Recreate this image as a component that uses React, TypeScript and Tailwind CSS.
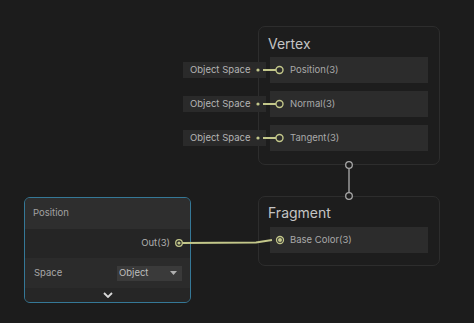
import React from "react";

const wire = "#c3c78a";

function ObjSpace({ top }: { top: number }) {
  return (
    <div className="absolute flex items-center" style={{ left: 183, top }}>
      <div className="flex h-[16px] w-[83px] items-center bg-[#2a2a2a] pl-[7px] text-[9.5px] text-[#b4b4b4]">
        Object Space
      </div>
    </div>
  );
}

function PortRow({ label }: { label: string }) {
  return (
    <div className="flex h-[26px] w-[158px] items-center bg-[#2c2c2c] pl-[20px] text-[9.5px] text-[#a9a9a9]">
      {label}
    </div>
  );
}

export default function App() {
  return (
    <div
      className="relative h-[323px] w-[474px] overflow-hidden bg-[#1c1c1c]"
      style={{ fontFamily: "Inter, 'Noto Sans', sans-serif" }}
    >
      {/* Vertex block */}
      <div className="absolute left-[258px] top-[26px] flex h-[139px] w-[182px] flex-col rounded-[7px] border border-[#2d2d2d] bg-[#1d1d1d] px-[11px]">
        <div className="-ml-[2px] pt-[8px] text-[14px] leading-[18px] text-[#c4c4c4]">Vertex</div>
        <div className="mt-[4px] flex flex-col gap-[8px]">
          <PortRow label="Position(3)" />
          <PortRow label="Normal(3)" />
          <PortRow label="Tangent(3)" />
        </div>
      </div>

      {/* Fragment block */}
      <div className="absolute left-[258px] top-[196px] flex h-[70px] w-[182px] flex-col rounded-[7px] border border-[#2d2d2d] bg-[#1d1d1d] px-[11px]">
        <div className="-ml-[2px] pt-[7px] text-[14px] leading-[18px] text-[#c4c4c4]">Fragment</div>
        <div className="mt-[5px]">
          <PortRow label="Base Color(3)" />
        </div>
      </div>

      <ObjSpace top={62} />
      <ObjSpace top={96} />
      <ObjSpace top={130} />

      {/* Position node */}
      <div className="absolute left-[24px] top-[197px] flex h-[106px] w-[167px] flex-col overflow-hidden rounded-[6px] border-[1.5px] border-[#357897] bg-[#2a2a2a]">
        <div className="flex h-[31px] items-center bg-[#2e2e2e] pl-[8px] text-[9.5px] text-[#a2a2a2]">
          Position
        </div>
        <div className="flex h-[29px] items-center justify-end bg-[#252525] pr-[20px] text-[9.5px] text-[#b0b0b0]">
          Out(3)
        </div>
        <div className="flex h-[30px] items-center justify-between bg-[#2b2b2b] pl-[9px] pr-[8px] text-[9.5px] text-[#a8a8a8]">
          <span>Space</span>
          <div className="flex h-[15px] w-[65px] items-center justify-between bg-[#3a3a3a] pl-[2px] pr-[5px] text-[#bdbdbd]">
            <span>Object</span>
            <svg width="7" height="4" viewBox="0 0 7 4">
              <path d="M0 0 L7 0 L3.5 4 Z" fill="#b0b0b0" />
            </svg>
          </div>
        </div>
        <div className="flex flex-1 items-center justify-center bg-[#262626]">
          <svg width="10" height="6" viewBox="0 0 10 6">
            <path d="M1 1 L5 5 L9 1" stroke="#d8d8d8" strokeWidth="1.8" fill="none" />
          </svg>
        </div>
      </div>

      {/* Wires & ports overlay */}
      <svg className="absolute left-0 top-0" width="474" height="323" viewBox="0 0 474 323">
        <line x1="349" y1="168.5" x2="349" y2="192.5" stroke="#9a9a9a" strokeWidth="1.5" />
        <circle cx="349" cy="165" r="3.3" fill="#1d1d1d" stroke="#a8a8a8" strokeWidth="1.3" />
        <circle cx="349" cy="196" r="3.3" fill="#1d1d1d" stroke="#a8a8a8" strokeWidth="1.3" />

        {[70, 104, 138].map((y) => (
          <g key={y}>
            <circle cx="258" cy={y} r="1.6" fill={wire} />
            <line x1="263" y1={y} x2="276" y2={y} stroke={wire} strokeWidth="2" />
            <circle cx="279.5" cy={y} r="3.5" fill="#2c2c2c" stroke={wire} strokeWidth="1.4" />
          </g>
        ))}

        <path d="M182 243 L256 242.5 L272 240" stroke={wire} strokeWidth="2" fill="none" />
        <circle cx="179" cy="243" r="3.3" fill="#262626" stroke={wire} strokeWidth="1.3" />
        <circle cx="179" cy="243" r="1.6" fill={wire} />
        <circle cx="280" cy="240" r="3.5" fill="#2c2c2c" stroke={wire} strokeWidth="1.3" />
        <circle cx="280" cy="240" r="2" fill={wire} />
      </svg>
    </div>
  );
}
